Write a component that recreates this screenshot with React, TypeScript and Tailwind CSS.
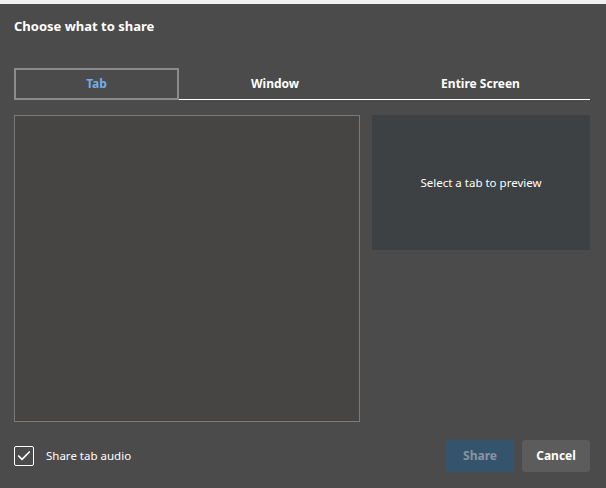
import { Check } from "lucide-react";

const TABS = [
  { label: "Tab", w: "w-[165px]", active: true },
  { label: "Window", w: "w-[192px]" },
  { label: "Entire Screen", w: "flex-1" },
];

export default function App() {
  return (
    <div className="w-[606px] h-[488px] bg-[#f0f0f0] pt-[4px] overflow-hidden" style={{ fontFamily: '"Segoe UI", "Noto Sans", "Open Sans", sans-serif' }}>
      <div className="h-[484px] bg-[#4b4b4b] px-[14px] pr-[16px] flex flex-col">
        <h1 className="text-[13px] font-bold text-white leading-none mt-[16px]">Choose what to share</h1>

        {/* Tabs */}
        <div className="flex mt-[35px] h-[32px]">
          {TABS.map((t) =>
            t.active ? (
              <div key={t.label} className={`${t.w} border-2 border-[#8b8b8b] flex items-center justify-center text-[12px] font-bold text-[#74aee8]`}>
                {t.label}
              </div>
            ) : (
              <div key={t.label} className={`${t.w} border-b border-white flex items-center justify-center text-[12px] font-bold text-white pt-[1px]`}>
                {t.label}
              </div>
            )
          )}
        </div>

        {/* Content */}
        <div className="flex gap-[12px] mt-[15px]">
          <div className="w-[346px] h-[307px] bg-[#474543] border border-[#7a7a7a]" />
          <div className="flex-1 h-[135px] bg-[#3e4143] flex items-center justify-center text-[11.5px] text-white">
            Select a tab to preview
          </div>
        </div>

        {/* Footer */}
        <div className="flex items-center mt-[18px]">
          <label className="flex items-center gap-[12px] text-[11.5px] text-white">
            <span className="w-[20px] h-[20px] border border-white rounded-[2px] flex items-center justify-center">
              <Check size={16} strokeWidth={2.5} className="text-white" />
            </span>
            Share tab audio
          </label>
          <div className="ml-auto flex gap-[8px]">
            <button className="w-[68px] h-[32px] rounded-[3px] bg-[#34546e] text-[12px] font-bold text-[#8a949e]">Share</button>
            <button className="w-[68px] h-[32px] rounded-[3px] bg-[#5c5c5c] text-[12px] font-bold text-white">Cancel</button>
          </div>
        </div>
      </div>
    </div>
  );
}
